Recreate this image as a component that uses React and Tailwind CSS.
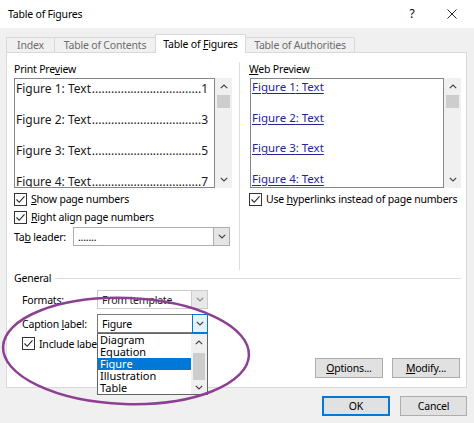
import React from 'react';

function Chevron({ up = false, color = '#444' }) {
    return (
        <svg width="8" height="5" viewBox="0 0 8 5">
            <polyline
                points={up ? '0.8,4.2 4,1 7.2,4.2' : '0.8,0.8 4,4 7.2,0.8'}
                fill="none"
                stroke={color}
                strokeWidth="1.2"
            />
        </svg>
    );
}

function Check() {
    return (
        <div className="w-[13px] h-[13px] border border-[#333] bg-white flex items-center justify-center shrink-0">
            <svg width="11" height="11" viewBox="0 0 11 11">
                <polyline points="1.5,5.5 4.2,8.3 9.5,2.3" fill="none" stroke="#222" strokeWidth="1.1" />
            </svg>
        </div>
    );
}

function U({ children }) {
    return <span className="underline underline-offset-[1px]">{children}</span>;
}

// vertical scrollbar next to the preview boxes
function ScrollBar() {
    return (
        <div className="w-[17px] h-[110px] bg-[#f0f0f0] flex flex-col items-center">
            <div className="h-[17px] flex items-center justify-center"><Chevron up /></div>
            <div className="w-[13px] h-[13px] bg-[#cdcdcd]" />
            <div className="flex-1" />
            <div className="h-[17px] flex items-center justify-center"><Chevron /></div>
        </div>
    );
}

function Leader({ label, page }) {
    return (
        <div className="flex h-[16px] leading-[16px] whitespace-nowrap">
            <span>{label}</span>
            <span className="flex-1 text-right">{'.'.repeat(34)}</span>
            <span>{page}</span>
        </div>
    );
}

export default function App() {
    const figures = [1, 2, 3, 4];
    const pages = [1, 3, 5, 7];
    const captions = ['Diagram', 'Equation', 'Figure', 'Illustration', 'Table'];

    return (
        <div className="relative w-[474px] h-[423px] overflow-hidden bg-[#f0f0f0] font-['Noto_Sans',sans-serif] text-[10.5px] leading-[14px] tracking-[-0.2px] text-black">
            {/* Title bar */}
            <div className="h-[28px] bg-white flex items-center pl-[8px] pr-[17px]">
                <span className="flex-1 text-[10.5px]">Table of Figures</span>
                <span className="w-[10px] text-center text-[12px] mr-[30px]">?</span>
                <svg width="10" height="10" viewBox="0 0 10 10">
                    <path d="M0.5 0.5 L9.5 9.5 M9.5 0.5 L0.5 9.5" stroke="#222" strokeWidth="1" />
                </svg>
            </div>

            {/* Tabs */}
            <div className="flex items-end h-[24px] pl-[6px] relative z-10">
                <div className="w-[48px] h-[15px] border-t border-l border-[#d9d9d9] flex items-center justify-center text-[#6d6d6d]">Index</div>
                <div className="w-[101px] h-[15px] border-t border-l border-[#d9d9d9] flex items-center justify-center text-[#6d6d6d]">Table of Contents</div>
                <div className="w-[91px] h-[19px] -mb-px bg-white border-t border-l border-r border-[#d9d9d9] flex items-center justify-center">
                    <span>Table of <U>F</U>igures</span>
                </div>
                <div className="w-[109px] h-[15px] border-t border-r border-[#d9d9d9] flex items-center justify-center text-[#6d6d6d]">Table of Authorities</div>
            </div>

            {/* Tab panel */}
            <div className="ml-[6px] w-[461px] h-[336px] bg-white border border-[#d9d9d9] flex flex-col">
                <div className="flex h-[217px] pt-[9px]">
                    {/* Print preview */}
                    <div className="w-[233px] border-r border-[#dcdcdc] pl-[7px] flex flex-col">
                        <div className="h-[14px]">Print Pre<U>v</U>iew</div>
                        <div className="flex mt-[2px]">
                            <div className="w-[201px] h-[110px] border border-[#828790] overflow-hidden pl-[1px] pr-[6px] pt-[2px] flex flex-col gap-[15px] text-[12px] tracking-normal text-[#1a1a1a]">
                                {figures.map((n, i) => (
                                    <Leader key={n} label={`Figure ${n}: Text`} page={pages[i]} />
                                ))}
                            </div>
                            <ScrollBar />
                        </div>
                        <div className="mt-[2px] h-[18px] flex items-center gap-[4px]">
                            <Check />
                            <span><U>S</U>how page numbers</span>
                        </div>
                        <div className="h-[18px] flex items-center gap-[4px]">
                            <Check />
                            <span><U>R</U>ight align page numbers</span>
                        </div>
                        <div className="mt-[1px] h-[19px] flex items-center">
                            <span className="w-[59px]">Ta<U>b</U> leader:</span>
                            <div className="w-[157px] h-[19px] flex border border-[#adadad] bg-white">
                                <div className="flex-1 pl-[4px] flex items-center">.......</div>
                                <div className="w-[16px] flex items-center justify-center bg-[#e5e5e5] border-l border-[#adadad]">
                                    <Chevron />
                                </div>
                            </div>
                        </div>
                    </div>

                    {/* Web preview */}
                    <div className="flex-1 pl-[9px] flex flex-col">
                        <div className="h-[14px]"><U>W</U>eb Preview</div>
                        <div className="flex mt-[2px] ml-[1px]">
                            <div className="w-[194px] h-[110px] border border-[#828790] overflow-hidden pl-[1px] flex flex-col gap-[14.5px] text-[11.5px] tracking-normal text-[#24249c]">
                                {figures.map(n => (
                                    <div key={n} className="h-[16px] leading-[16px]">
                                        <span className="underline underline-offset-[2px]">Figure {n}: Text</span>
                                    </div>
                                ))}
                            </div>
                            <ScrollBar />
                        </div>
                        <div className="mt-[2px] h-[18px] flex items-center gap-[4px]">
                            <Check />
                            <span>Use <U>h</U>yperlinks instead of page numbers</span>
                        </div>
                    </div>
                </div>

                {/* General */}
                <div className="mt-[1px] h-[14px] flex items-center pl-[7px] pr-[5px]">
                    <span>General</span>
                    <div className="flex-1 h-px bg-[#dcdcdc] ml-[4px]" />
                </div>
                <div className="mt-[5px] h-[19px] flex items-center pl-[15px]">
                    <span className="w-[75px]">Formats:</span>
                    <div className="w-[111px] h-[19px] flex border border-[#cccccc] bg-white">
                        <div className="flex-1 pl-[4px] flex items-center text-[#222]">From template</div>
                        <div className="w-[16px] flex items-center justify-center bg-[#e8e8e8] border-l border-[#cccccc]">
                            <Chevron color="#8a8a8a" />
                        </div>
                    </div>
                </div>
                <div className="mt-[5px] h-[19px] flex items-center pl-[15px] relative z-20">
                    <span className="w-[75px]">Caption <U>l</U>abel:</span>
                    <div className="relative w-[111px] h-[19px]">
                        <div className="w-[111px] h-[19px] flex border border-[#7a7a7a] bg-white">
                            <div className="flex-1 pl-[4px] flex items-center">Figure</div>
                            <div className="w-[16px] -my-px -mr-px flex items-center justify-center bg-[#e5f1fb] border border-[#0078d7]">
                                <Chevron />
                            </div>
                        </div>
                        {/* open caption list */}
                        <div className="absolute top-full left-0 w-[111px] h-[62px] border border-[#646464] bg-white flex text-[11px] leading-[12px] tracking-normal">
                            <div className="flex-1 flex flex-col">
                                {captions.map(c => (
                                    <div
                                        key={c}
                                        className={c === 'Figure' ? 'h-[12px] pl-[2px] bg-[#0078d7] text-white' : 'h-[12px] pl-[2px]'}
                                    >
                                        {c}
                                    </div>
                                ))}
                            </div>
                            <div className="w-[16px] bg-[#f0f0f0] flex flex-col items-center">
                                <div className="h-[17px] flex items-center justify-center"><Chevron up /></div>
                                <div className="w-[12px] h-[27px] mt-[2px] bg-[#cdcdcd]" />
                                <div className="flex-1 flex items-center justify-center"><Chevron /></div>
                            </div>
                        </div>
                    </div>
                </div>
                <div className="mt-[3px] h-[15px] flex items-center gap-[4px] pl-[15px]">
                    <Check />
                    <span>Include label and number</span>
                </div>
                <div className="mt-[7px] flex justify-end gap-[9px] pr-[6px]">
                    <button className="w-[68px] h-[20px] bg-[#e1e1e1] border border-[#adadad]"><U>O</U>ptions...</button>
                    <button className="w-[68px] h-[20px] bg-[#e1e1e1] border border-[#adadad]"><U>M</U>odify...</button>
                </div>
            </div>

            {/* Dialog buttons */}
            <div className="mt-[8px] flex justify-end gap-[10px] pr-[7px]">
                <button className="w-[68px] h-[20px] bg-[#e1e1e1] border-2 border-[#0078d7]">OK</button>
                <button className="w-[67px] h-[20px] bg-[#e1e1e1] border border-[#adadad]">Cancel</button>
            </div>

            {/* hand-drawn annotation */}
            <svg className="absolute inset-0 pointer-events-none z-30" width="474" height="423">
                <ellipse cx="126" cy="351" rx="123" ry="53" transform="rotate(2 126 351)" fill="none" stroke="#8d3f93" strokeWidth="2.5" />
            </svg>
        </div>
    );
}
